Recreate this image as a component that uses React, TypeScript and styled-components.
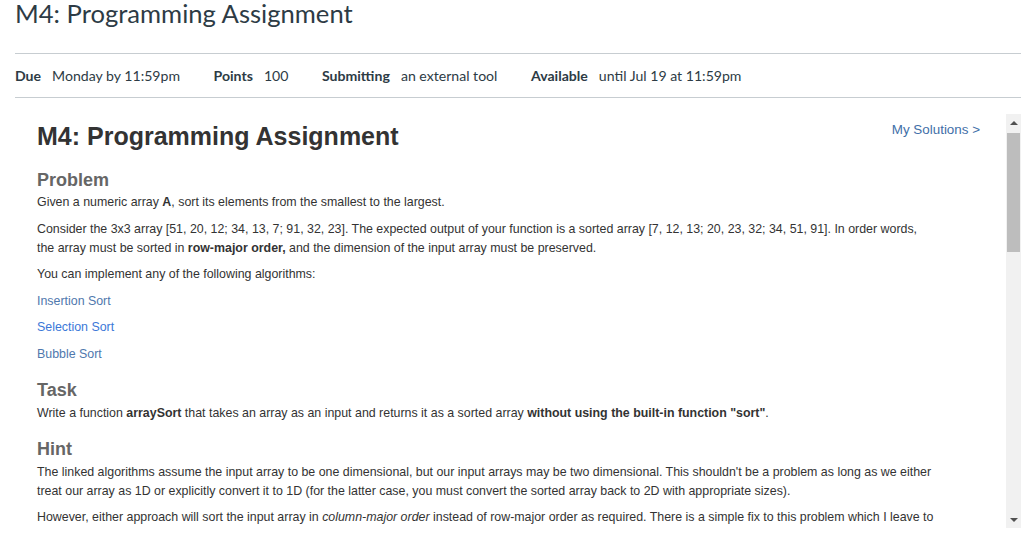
import React from 'react';
import styled, { createGlobalStyle } from 'styled-components';

const GlobalStyle = createGlobalStyle`
  html, body {
    margin: 0;
    padding: 0;
    background: #fff;
  }
  body {
    font-family: Lato, "Liberation Sans", sans-serif;
    color: #2d3b45;
    overflow: hidden;
  }
`;

const details = [
  { label: 'Due', value: 'Monday by 11:59pm' },
  { label: 'Points', value: '100' },
  { label: 'Submitting', value: 'an external tool' },
  { label: 'Available', value: 'until Jul 19 at 11:59pm' },
];

const App = () => {
  return (
    <Page>
      <GlobalStyle />
      <PageTitle>M4: Programming Assignment</PageTitle>

      <DetailsBar>
        {details.map(d => (
          <DetailItem key={d.label}>
            <DetailLabel>{d.label}</DetailLabel>
            <DetailValue>{d.value}</DetailValue>
          </DetailItem>
        ))}
      </DetailsBar>

      <ToolFrame>
        <FrameContent>
          <FrameHeader>
            <AssignmentTitle>M4: Programming Assignment</AssignmentTitle>
            <SolutionsLink href="#">My Solutions &gt;</SolutionsLink>
          </FrameHeader>

          <SectionHeading>Problem</SectionHeading>
          <Para>
            Given a numeric array <b>A</b>, sort its elements from the smallest to the largest.
          </Para>
          <Para>
            Consider the 3x3 array [51, 20, 12; 34, 13, 7; 91, 32, 23]. The expected output of your
            function is a sorted array [7, 12, 13; 20, 23, 32; 34, 51, 91]. In order words,
            <br />
            the array must be sorted in <b>row-major order,</b> and the dimension of the input array
            must be preserved.
          </Para>
          <Para>You can implement any of the following algorithms:</Para>
          <Para>
            <AlgoLink href="#">Insertion Sort</AlgoLink>
          </Para>
          <Para>
            <AlgoLink href="#" $fresh>Selection Sort</AlgoLink>
          </Para>
          <Para>
            <AlgoLink href="#">Bubble Sort</AlgoLink>
          </Para>

          <SectionHeading>Task</SectionHeading>
          <Para>
            Write a function <b>arraySort</b> that takes an array as an input and returns it as a
            sorted array <b>without using the built-in function "sort"</b>.
          </Para>

          <SectionHeading>Hint</SectionHeading>
          <Para>
            The linked algorithms assume the input array to be one dimensional, but our input arrays
            may be two dimensional. This shouldn't be a problem as long as we either
            <br />
            treat our array as 1D or explicitly convert it to 1D (for the latter case, you must
            convert the sorted array back to 2D with appropriate sizes).
          </Para>
          <Para>
            However, either approach will sort the input array in <i>column-major order</i> instead
            of row-major order as required. There is a simple fix to this problem which I leave to
            <br />
            you to figure out.
          </Para>
        </FrameContent>

        <Scrollbar>
          <ScrollButton>
            <Arrow $up />
          </ScrollButton>
          <ScrollTrack>
            <ScrollThumb />
          </ScrollTrack>
          <ScrollButton>
            <Arrow />
          </ScrollButton>
        </Scrollbar>
      </ToolFrame>
    </Page>
  );
};

const Page = styled.div`
  padding: 0 3px 0 15px;
  width: 1006px;
`;

const PageTitle = styled.h1`
  margin: 0;
  font-family: Lato, "Liberation Sans", sans-serif;
  font-weight: 400;
  font-size: 25.6px;
  line-height: 27px;
  color: #2d3b45;
  height: 53px;
`;

const DetailsBar = styled.div`
  display: flex;
  align-items: center;
  border-top: 1px solid #c7cdd1;
  border-bottom: 1px solid #c7cdd1;
  height: 43px;
  font-size: 14.1px;
`;

const DetailItem = styled.div`
  display: flex;
  align-items: baseline;
  margin-right: 33.5px;
`;

const DetailLabel = styled.span`
  font-weight: 700;
  margin-right: 11px;
`;

const DetailValue = styled.span`
  font-weight: 400;
`;

const ToolFrame = styled.div`
  display: flex;
  margin-top: 16px;
  height: 414px;
  overflow: hidden;
`;

const FrameContent = styled.div`
  flex: 1;
  padding: 8px 26px 0 22px;
  font-family: Arial, "Liberation Sans", sans-serif;
  font-size: 12.4px;
  line-height: 19px;
  color: #333;
  overflow: hidden;
`;

const FrameHeader = styled.div`
  display: flex;
  justify-content: space-between;
  align-items: flex-start;
  margin-bottom: 18.5px;
`;

const AssignmentTitle = styled.h2`
  margin: 0;
  font-size: 25px;
  line-height: 28px;
  font-weight: 700;
  color: #333;
`;

const SolutionsLink = styled.a`
  margin-top: 0;
  font-size: 13.4px;
  line-height: 15px;
  color: #3f6fa8;
  text-decoration: none;
`;

const SectionHeading = styled.h3`
  margin: 15.5px 0 2.5px;
  font-size: 18px;
  line-height: 22px;
  font-weight: 700;
  color: #666;
`;

const Para = styled.p`
  margin: 0 0 7.5px;

  b {
    font-weight: 700;
  }
`;

const AlgoLink = styled.a<{ $fresh?: boolean }>`
  color: ${props => (props.$fresh ? '#3b78d8' : '#4f78ad')};
  text-decoration: none;
`;

const Scrollbar = styled.div`
  width: 15px;
  flex-shrink: 0;
  display: flex;
  flex-direction: column;
  background: #f1f1f1;
`;

const ScrollButton = styled.div`
  height: 17px;
  display: flex;
  align-items: center;
  justify-content: center;
`;

const Arrow = styled.div<{ $up?: boolean }>`
  width: 0;
  height: 0;
  border-left: 4px solid transparent;
  border-right: 4px solid transparent;
  ${props =>
    props.$up
      ? 'border-bottom: 4px solid #505050;'
      : 'border-top: 4px solid #505050;'}
`;

const ScrollTrack = styled.div`
  flex: 1;
  padding-top: 2px;
`;

const ScrollThumb = styled.div`
  height: 119px;
  margin: 0 1px;
  background: #bdbdbd;
`;

export default App;
